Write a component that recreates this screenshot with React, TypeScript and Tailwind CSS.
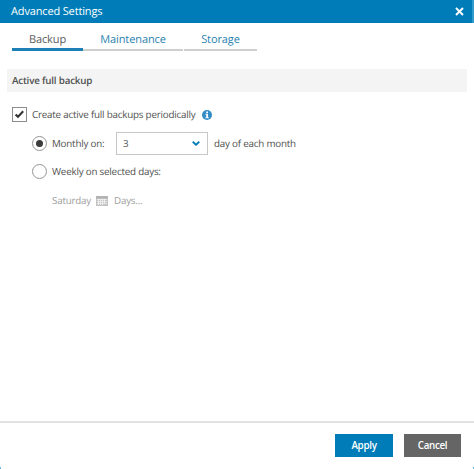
import type { ReactNode } from 'react'
import clsx from 'clsx'

const tabs = [
  { label: 'Backup', className: 'w-[71px]' },
  { label: 'Maintenance', className: 'w-[100px]' },
  { label: 'Storage', className: 'w-[73px] ml-px' },
]

const CloseIcon = () => (
  <svg className="w-[9px] h-[9px]" viewBox="0 0 9 9" fill="none" stroke="white" strokeWidth="1.9">
    <path d="M1 1l7 7M8 1L1 8" />
  </svg>
)

const InfoIcon = () => (
  <svg className="w-[10px] h-[10px]" viewBox="0 0 10 10">
    <circle cx="5" cy="5" r="5" fill="#328dc6" />
    <path d="M4.2 1.5h1.8v1.5H4.2zM3.5 3.8H6v3.4h.8v1H3.4v-1h.9V4.8h-.8z" fill="white" />
  </svg>
)

const CalendarIcon = () => (
  <svg className="w-[12px] h-[10px]" viewBox="0 0 12 10">
    <path d="M0 0h12v10H0z" fill="#c4c4c4" />
    <path d="M0 0h12v2.5H0z" fill="#b3b3b3" />
    <path
      d="M1 3.5h10M1 5.5h10M1 7.5h10M2.5 3v6M4.5 3v6M6.5 3v6M8.5 3v4.5"
      stroke="white"
      strokeWidth=".6"
    />
  </svg>
)

const Radio = ({ checked, children }: { checked?: boolean; children: ReactNode }) => (
  <div className="flex items-center">
    <span className="flex w-[15px] h-[15px] items-center justify-center rounded-full border border-[#949494]">
      {checked && <span className="w-[7px] h-[7px] rounded-full bg-[#3c3c3c]" />}
    </span>
    <span className="ml-[5px]">{children}</span>
  </div>
)

export default function App() {
  return (
    <div className="flex h-[469px] w-[474px] flex-col bg-white font-['Open_Sans',sans-serif] text-[9.8px] leading-[14px] tracking-[-0.2px] text-[#505050] [text-rendering:geometricPrecision]">
      <header className="flex h-[23px] shrink-0 items-center justify-between border-r-2 border-[#329bcd] bg-[#007db8] pl-[11px] pr-[8px] text-[11px] font-medium tracking-[-0.15px] text-white">
        <span className="pt-px">Advanced Settings</span>
        <CloseIcon />
      </header>

      <nav className="ml-[12px] mt-[8px] flex h-[20px] text-[11px] tracking-[-0.1px]">
        {tabs.map((tab, i) => (
          <div
            key={tab.label}
            className={clsx(
              'flex justify-center pt-[2px]',
              tab.className,
              i === 0
                ? 'border-b-[3px] border-[#1c7fb5] text-[#5c5c5c]'
                : 'border-b-2 border-[#cfcfcf] text-[#2a7fae]'
            )}
          >
            {tab.label}
          </div>
        ))}
      </nav>

      <h2 className="mx-[7px] mt-[18px] flex h-[23px] shrink-0 items-center bg-[#f4f4f4] pl-[5px] font-semibold">
        Active full backup
      </h2>

      <main className="flex-1 pl-[12px] pt-[15px]">
        <div className="flex h-[15px] items-center">
          <span className="flex h-[15px] w-[15px] items-center justify-center border border-[#8c8c8c]">
            <svg className="h-[9px] w-[9px]" viewBox="0 0 9 9" fill="none" stroke="#333" strokeWidth="2">
              <path d="M.6 4.6l2.4 2.2L8.2 1.2" />
            </svg>
          </span>
          <span className="ml-[5px] w-[170px]">Create active full backups periodically</span>
          <InfoIcon />
        </div>

        <div className="ml-[20px] mt-[10px] flex h-[23px] items-center">
          <div className="w-[84px]">
            <Radio checked>Monthly on:</Radio>
          </div>
          <div className="mr-[6px] flex h-[23px] w-[92px] items-center justify-between border border-[#c4c8cb] pl-[6px] pr-[7px]">
            <span>3</span>
            <svg className="h-[5px] w-[8px]" viewBox="0 0 8 5" fill="none" stroke="#007db8" strokeWidth="1.8">
              <path d="M.7.8L4 3.7 7.3.8" />
            </svg>
          </div>
          <span>day of each month</span>
        </div>

        <div className="ml-[20px] mt-[9px]">
          <Radio>Weekly on selected days:</Radio>
        </div>

        <div className="ml-[40px] mt-[15px] flex items-center text-[#a0a0a0]">
          <span className="w-[44px]">Saturday</span>
          <CalendarIcon />
          <span className="ml-[6px]">Days...</span>
        </div>
      </main>

      <footer className="flex h-[46px] shrink-0 justify-end gap-[11px] border-t-2 border-[#e2e2e2] pr-[13px] pt-[11px] font-semibold tracking-[-0.3px] text-white">
        <button className="h-[23px] w-[58px] bg-[#007db8]">Apply</button>
        <button className="h-[23px] w-[57px] bg-[#656565]">Cancel</button>
      </footer>
      <div className="flex h-[2px] justify-between">
        <span className="w-px bg-[#6fb5dc]" />
        <span className="w-px bg-[#6fb5dc]" />
      </div>
    </div>
  )
}
